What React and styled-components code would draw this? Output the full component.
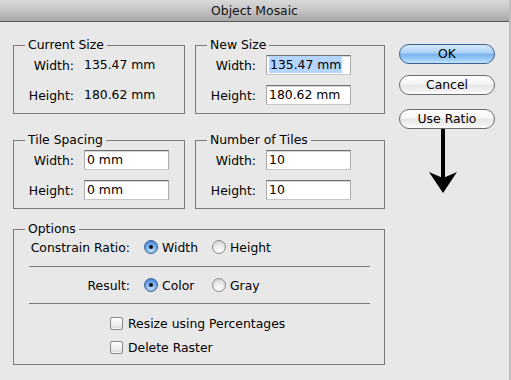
import React from "react";
import styled, { createGlobalStyle, css } from "styled-components";

const GlobalStyle = createGlobalStyle`
  body {
    margin: 0;
    background: #e8e8e8;
    font-family: "DejaVu Sans", "Liberation Sans", sans-serif;
    font-size: 12.4px;
    color: #000;
  }
`;

const Window = styled.div`
  width: 511px;
  height: 380px;
  box-sizing: border-box;
  background: #e8e8e8;
  border-right: 2px solid #bdbdbd;
  display: flex;
  flex-direction: column;
`;

const TitleBar = styled.div`
  height: 21px;
  line-height: 21px;
  text-align: center;
  border-bottom: 1px solid #575757;
  background: linear-gradient(#d9d9d9, #c4c4c4 50%, #a6a6a6);
  color: #111;
`;

const Body = styled.div`
  display: flex;
  gap: 14px;
  padding: 15px 0 0 13px;
`;

const LeftColumn = styled.div`
  width: 372px;
  display: flex;
  flex-direction: column;
`;

const TopGrid = styled.div`
  display: grid;
  grid-template-columns: 172px 190px;
  column-gap: 10px;
  row-gap: 18px;
`;

const Group = styled.fieldset`
  margin: ${(p) => p.$mt || 0}px 0 0;
  padding: 0;
  min-width: 0;
  border: 1px solid #7b7b7b;
  legend {
    margin-left: 11px;
    padding: 0 3px;
    line-height: 16px;
  }
`;

const FieldRows = styled.div`
  display: grid;
  grid-template-columns: 46px 85px;
  column-gap: 10px;
  row-gap: 10px;
  align-items: center;
  padding: 2px 0 8px 14px;
`;

const RowLabel = styled.div`
  text-align: right;
  white-space: nowrap;
`;

const Value = styled.div`
  height: 20px;
  line-height: 20px;
  white-space: nowrap;
`;

const Field = styled.div`
  width: 85px;
  height: 20px;
  box-sizing: border-box;
  background: #fff;
  border: 1px solid;
  border-color: #6f6f6f #a9a9a9 #c6c6c6 #a9a9a9;
  box-shadow: inset 0 1px 0 #d6d6d6;
  padding-left: 2px;
  line-height: 18px;
  white-space: nowrap;
`;

const Selected = styled.span`
  background: #b4d5fe;
  padding: 1px 1px;
`;

const OptionsBody = styled.div`
  padding: 0 14px 7px 15px;
`;

const OptionRow = styled.div`
  display: flex;
  align-items: center;
  height: 20px;
`;

const OptionLabel = styled.div`
  width: 101px;
  text-align: right;
  margin-right: 14px;
  white-space: nowrap;
`;

const RadioOption = styled.div`
  width: 68px;
  display: flex;
  align-items: center;
  gap: 4px;
`;

const Radio = styled.span`
  width: 14px;
  height: 14px;
  box-sizing: border-box;
  border-radius: 50%;
  position: relative;
  flex-shrink: 0;
  ${(p) =>
    p.$checked
      ? css`
          border: 1px solid #3a5d8f;
          background: radial-gradient(circle at 50% 75%, #c4e2ff, #6aa5e8 55%, #3a78cc);
          &::after {
            content: "";
            position: absolute;
            left: 4px;
            top: 4px;
            width: 4px;
            height: 4px;
            border-radius: 50%;
            background: #111;
          }
        `
      : css`
          border: 1px solid #8b8b8b;
          background: radial-gradient(circle at 50% 80%, #ffffff, #e4e4e4 60%, #c9c9c9);
        `}
`;

const Separator = styled.div`
  height: 1px;
  background: #7b7b7b;
  margin: ${(p) => p.$m};
`;

const CheckRow = styled.div`
  display: flex;
  align-items: center;
  gap: 5px;
  height: 20px;
  margin: ${(p) => p.$mt || 0}px 0 0 81px;
`;

const Checkbox = styled.span`
  width: 13px;
  height: 13px;
  box-sizing: border-box;
  border: 1px solid #8a8a8a;
  border-radius: 2px;
  background: linear-gradient(#ffffff, #f0f0f0 50%, #dcdcdc);
  box-shadow: inset 0 -1px 0 #f8f8f8;
`;

const ButtonColumn = styled.div`
  display: flex;
  flex-direction: column;
  padding-top: 7px;
`;

const Button = styled.div`
  width: 96px;
  height: 20px;
  box-sizing: border-box;
  border-radius: 10px;
  text-align: center;
  line-height: 18px;
  margin-top: ${(p) => p.$mt || 0}px;
  ${(p) =>
    p.$primary
      ? css`
          border: 1px solid #3d5f98;
          background: linear-gradient(#d6ebfd, #a9d0f6 45%, #78b2ee 50%, #9ccbf7 80%, #c4e6fe);
        `
      : css`
          border: 1px solid #6c6c6c;
          background: linear-gradient(#ffffff, #f6f6f6 45%, #e6e6e6 50%, #f0f0f0 80%, #ffffff);
        `}
`;

const ArrowSvg = styled.svg`
  display: block;
  margin-left: 27px;
`;

const Arrow = () => (
  <ArrowSvg width="32" height="65" viewBox="0 0 32 65">
    <rect x="15" y="0" width="4" height="50" fill="#000" />
    <polygon points="3,43 17,49 31,43 17,64" fill="#000" />
  </ArrowSvg>
);

const SizeGroup = ({ title, rows, mt }) => (
  <Group $mt={mt}>
    <legend>{title}</legend>
    <FieldRows>
      {rows.map((r) => (
        <React.Fragment key={r.label}>
          <RowLabel>{r.label}</RowLabel>
          {r.text ? (
            <Value>{r.text}</Value>
          ) : (
            <Field>{r.selected ? <Selected>{r.value}</Selected> : r.value}</Field>
          )}
        </React.Fragment>
      ))}
    </FieldRows>
  </Group>
);

const RadioGroup = ({ label, options, checked }) => (
  <OptionRow>
    <OptionLabel>{label}</OptionLabel>
    {options.map((o) => (
      <RadioOption key={o}>
        <Radio $checked={o === checked} />
        {o}
      </RadioOption>
    ))}
  </OptionRow>
);

export default function App() {
  return (
    <>
      <GlobalStyle />
      <Window>
        <TitleBar>Object Mosaic</TitleBar>
        <Body>
          <LeftColumn>
            <TopGrid>
              <SizeGroup
                title="Current Size"
                rows={[
                  { label: "Width:", text: "135.47 mm" },
                  { label: "Height:", text: "180.62 mm" },
                ]}
              />
              <SizeGroup
                title="New Size"
                rows={[
                  { label: "Width:", value: "135.47 mm", selected: true },
                  { label: "Height:", value: "180.62 mm" },
                ]}
              />
              <SizeGroup
                title="Tile Spacing"
                rows={[
                  { label: "Width:", value: "0 mm" },
                  { label: "Height:", value: "0 mm" },
                ]}
              />
              <SizeGroup
                title="Number of Tiles"
                rows={[
                  { label: "Width:", value: "10" },
                  { label: "Height:", value: "10" },
                ]}
              />
            </TopGrid>
            <Group $mt={12}>
              <legend>Options</legend>
              <OptionsBody>
                <RadioGroup
                  label="Constrain Ratio:"
                  options={["Width", "Height"]}
                  checked="Width"
                />
                <Separator $m="9px 0 8px" />
                <RadioGroup
                  label="Result:"
                  options={["Color", "Gray"]}
                  checked="Color"
                />
                <Separator $m="8px 0 9px" />
                <CheckRow>
                  <Checkbox />
                  Resize using Percentages
                </CheckRow>
                <CheckRow $mt={4}>
                  <Checkbox />
                  Delete Raster
                </CheckRow>
              </OptionsBody>
            </Group>
          </LeftColumn>
          <ButtonColumn>
            <Button $primary>OK</Button>
            <Button $mt={11}>Cancel</Button>
            <Button $mt={14}>Use Ratio</Button>
            <Arrow />
          </ButtonColumn>
        </Body>
      </Window>
    </>
  );
}
